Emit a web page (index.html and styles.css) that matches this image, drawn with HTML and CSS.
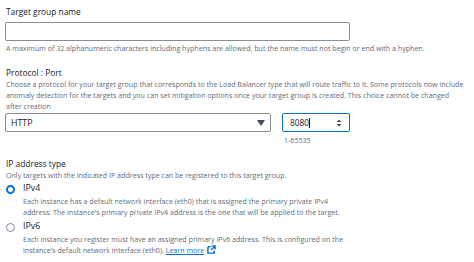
FILE: index.html
```html
<!DOCTYPE html>
<html>
<head>
<meta charset="utf-8">
<link rel="stylesheet" href="styles.css">
</head>
<body>
<div class="page">
  <section class="field">
    <div class="label">Target group name</div>
    <div class="textbox wide"></div>
    <div class="hint">A maximum of 32 alphanumeric characters including hyphens are allowed, but the name must not begin or end with a hyphen.</div>
  </section>

  <section class="field protocol">
    <div class="label">Protocol : Port</div>
    <div class="desc proto-desc">Choose a protocol for your target group that corresponds to the Load Balancer type that will route traffic to it. Some protocols now include anomaly detection for the targets and you can set mitigation options once your target group is created. This choice cannot be changed after creation</div>
    <div class="row">
      <div class="select">
        <span>HTTP</span>
        <svg class="caret" width="8" height="6" viewBox="0 0 8 6"><path d="M0 0H8L4 6Z" fill="#414d5c"/></svg>
      </div>
      <div class="portcol">
        <div class="port">
          <span>8080<span class="cursor"></span></span>
          <svg class="spin" width="6" height="8" viewBox="0 0 6 8"><path d="M0.5 3L3 0.5L5.5 3Z M0.5 5L3 7.5L5.5 5Z" fill="#414d5c"/></svg>
        </div>
        <div class="range">1-65535</div>
      </div>
    </div>
  </section>

  <section class="field iptype">
    <div class="label">IP address type</div>
    <div class="desc">Only targets with the indicated IP address type can be registered to this target group.</div>
    <div class="option">
      <span class="radio checked"></span>
      <div class="opt-body">
        <div class="opt-title">IPv4</div>
        <div class="desc">Each instance has a default network interface (eth0) that is assigned the primary private IPv4 address. The instance's primary private IPv4 address is the one that will be applied to the target.</div>
      </div>
    </div>
    <div class="option">
      <span class="radio"></span>
      <div class="opt-body">
        <div class="opt-title">IPv6</div>
        <div class="desc">Each instance you register must have an assigned primary IPv6 address. This is configured on the instance's default network interface (eth0). <a class="link">Learn more</a><svg class="ext" width="9" height="9" viewBox="0 0 10 10"><path d="M1 2H4M1 2V9H8V6" stroke="#0972d3" stroke-width="1.6" fill="none"/><path d="M5 1H9V5M9 1L4.5 5.5" stroke="#0972d3" stroke-width="1.6" fill="none"/></svg></div>
      </div>
    </div>
  </section>
</div>
</body>
</html>
```

FILE: styles.css
```css
html, body {
  margin: 0;
  padding: 0;
  background: #ffffff;
}
body {
  font-family: "Open Sans", "Noto Sans", sans-serif;
  color: #16191f;
}
.page {
  padding: 5px 6px 0 6px;
  width: 462px;
}
.label {
  font-size: 8.4px;
  line-height: 13px;
  color: #16191f;
}
.textbox {
  box-sizing: border-box;
  height: 19px;
  border: 1px solid #8c8c94;
  border-radius: 2px;
  margin-top: 4px;
  margin-left: -1px;
}
.textbox.wide {
  width: 345px;
}
.hint {
  font-size: 7.1px;
  line-height: 10px;
  color: #5f6b7a;
  margin-top: 2px;
  white-space: nowrap;
}
.protocol {
  margin-top: 13px;
}
.desc {
  font-size: 7.1px;
  line-height: 11px;
  color: #5f6b7a;
}
.proto-desc {
  width: 460px;
}
.row {
  display: flex;
  gap: 11px;
  margin-top: 1px;
  margin-left: -1px;
}
.select {
  box-sizing: border-box;
  width: 266px;
  height: 19px;
  border: 1px solid #8c8c94;
  border-radius: 2px;
  display: flex;
  align-items: center;
  justify-content: space-between;
  padding: 0 5px 0 5px;
  font-size: 8.8px;
  color: #16191f;
}
.portcol {
  display: flex;
  flex-direction: column;
}
.port {
  box-sizing: border-box;
  width: 68px;
  height: 19px;
  border: 1.5px solid #0972d3;
  border-radius: 2px;
  display: flex;
  align-items: center;
  justify-content: space-between;
  padding: 0 7px 0 7px;
  font-size: 8.4px;
  color: #16191f;
}
.cursor {
  display: inline-block;
  width: 1px;
  height: 10px;
  background: #16191f;
  vertical-align: -2px;
}
.range {
  font-size: 7.1px;
  line-height: 10px;
  color: #5f6b7a;
  margin-top: 3px;
  padding-left: 2px;
}
.iptype {
  margin-top: 12px;
}
.option {
  display: flex;
  gap: 5px;
  margin-top: 1px;
}
.option + .option {
  margin-top: 3px;
}
.radio {
  box-sizing: border-box;
  width: 9px;
  height: 9px;
  border-radius: 50%;
  border: 1px solid #7d8998;
  margin-top: 3px;
  flex: none;
}
.radio.checked {
  border: 2.5px solid #0972d3;
}
.opt-body {
  flex: 1;
  padding-left: 3px;
}
.opt-title {
  font-size: 8.8px;
  line-height: 13px;
  margin-bottom: 1px;
}
.option .desc {
  line-height: 10.5px;
  width: 325px;
}
.link {
  color: #0972d3;
  text-decoration: underline;
}
.ext {
  vertical-align: -1px;
  margin-left: 3px;
}
```
